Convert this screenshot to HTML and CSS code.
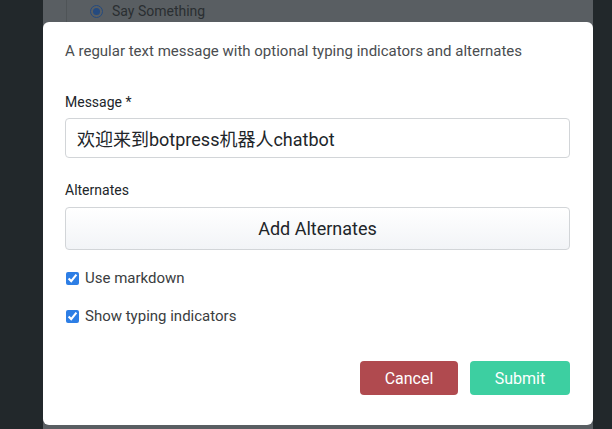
FILE: index.html
```html
<!DOCTYPE html>
<html>
<head>
<meta charset="utf-8">
<link rel="stylesheet" href="styles.css">
</head>
<body>
<div class="screen">
  <div class="side-left"></div>
  <div class="middle">
    <div class="behind">
      <div class="behind-line"></div>
      <label class="radio-row"><span class="radio"><span class="radio-dot"></span></span>Say Something</label>
    </div>
    <div class="modal">
      <p class="desc">A regular text message with optional typing indicators and alternates</p>
      <div class="field">
        <div class="label">Message *</div>
        <div class="input">欢迎来到botpress机器人chatbot</div>
      </div>
      <div class="field">
        <div class="label">Alternates</div>
        <button class="add-btn">Add Alternates</button>
      </div>
      <label class="check-row first"><input type="checkbox" checked> Use markdown</label>
      <label class="check-row"><input type="checkbox" checked> Show typing indicators</label>
      <div class="actions">
        <button class="btn cancel">Cancel</button>
        <button class="btn submit">Submit</button>
      </div>
    </div>
  </div>
  <div class="side-right"></div>
</div>
</body>
</html>
```
FILE: styles.css
```css
* { box-sizing: border-box; }
html, body { margin: 0; padding: 0; }
body {
  font-family: Roboto, "Noto Sans CJK SC", sans-serif;
  background: #22282b;
  width: 612px;
  height: 429px;
  overflow: hidden;
}
.screen {
  display: flex;
  height: 429px;
}
.side-left { width: 43px; background: #22282b; }
.side-right { width: 19px; background: #22282b; }
.middle {
  width: 550px;
  background: #595e62;
  display: flex;
  flex-direction: column;
}
.behind {
  height: 22px;
  display: flex;
  align-items: center;
  position: relative;
  padding-left: 47px;
}
.behind-line {
  position: absolute;
  left: 23px;
  top: 0;
  bottom: 0;
  width: 1px;
  background: #4f5457;
}
.radio-row {
  display: flex;
  align-items: center;
  gap: 9px;
  font-size: 14px;
  color: #2a2e31;
}
.radio {
  width: 13px;
  height: 13px;
  border-radius: 50%;
  border: 1.5px solid #244a7f;
  display: flex;
  align-items: center;
  justify-content: center;
}
.radio-dot {
  width: 7px;
  height: 7px;
  border-radius: 50%;
  background: #244a7f;
}
.modal {
  height: 403px;
  background: #fff;
  border-radius: 6px;
  padding: 19px 23px 0 22px;
  display: flex;
  flex-direction: column;
}
.desc {
  margin: 0;
  font-size: 15px;
  line-height: 20px;
  color: #4a4d50;
}
.field { margin-top: 31px; }
.field + .field { margin-top: 22px; }
.label {
  font-size: 14px;
  line-height: 20px;
  color: #212529;
}
.input {
  margin-top: 6px;
  height: 40px;
  border: 1px solid #d2d5d8;
  border-radius: 4px;
  padding: 0 11px;
  display: flex;
  align-items: center;
  font-size: 18px;
  color: #212529;
}
.add-btn {
  display: block;
  width: 100%;
  margin-top: 7px;
  height: 43px;
  border: 1px solid #d2d5d8;
  border-radius: 4px;
  background: linear-gradient(#ffffff, #f2f4f7);
  font-family: Roboto, sans-serif;
  font-size: 18px;
  color: #212529;
}
.check-row {
  display: flex;
  align-items: center;
  gap: 6px;
  font-size: 15px;
  line-height: 20px;
  color: #3a3d40;
  margin-top: 18px;
  padding-left: 1px;
}
.check-row.first { margin-top: 18px; }
.check-row input {
  margin: 0;
  width: 13px;
  height: 13px;
  accent-color: #2d7ee5;
}
.actions {
  display: flex;
  justify-content: flex-end;
  gap: 12px;
  margin-top: 35px;
}
.btn {
  height: 34px;
  border: none;
  border-radius: 4px;
  color: #fff;
  font-family: Roboto, sans-serif;
  font-size: 16px;
}
.cancel { width: 98px; background: #b04a4f; }
.submit { width: 100px; background: #3dcfa1; }
```
